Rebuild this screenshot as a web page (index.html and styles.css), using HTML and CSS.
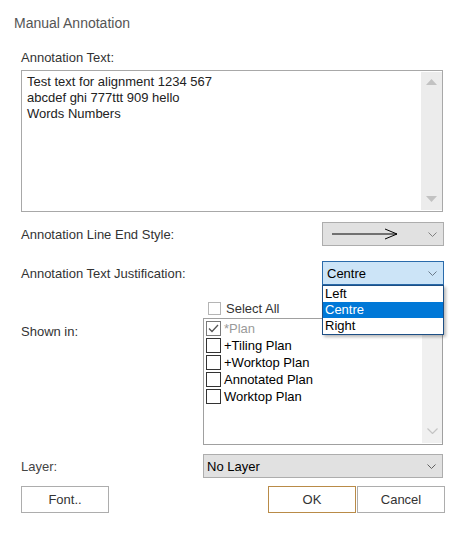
FILE: index.html
```html
<!DOCTYPE html>
<html>
<head>
<meta charset="utf-8">
<link rel="stylesheet" href="styles.css">
</head>
<body>
<div class="dialog">
  <div class="title">Manual Annotation</div>
  <div class="label-top">Annotation Text:</div>
  <div class="textbox">
    <div class="text-content">Test text for alignment 1234 567<br>abcdef ghi 777ttt 909 hello<br>Words Numbers</div>
    <div class="vscroll">
      <svg class="tri" width="11" height="6" viewBox="0 0 11 6"><path d="M0 6 L5.5 0 L11 6 Z" fill="#c2c2c2"/></svg>
      <svg class="tri" width="11" height="6" viewBox="0 0 11 6"><path d="M0 0 L5.5 6 L11 0 Z" fill="#c2c2c2"/></svg>
    </div>
  </div>

  <div class="row row-first">
    <span>Annotation Line End Style:</span>
    <div class="combo">
      <svg width="70" height="14" viewBox="0 0 70 14"><path d="M2 7 H67" stroke="#000" stroke-width="1"/><path d="M55 2 L67 7 L55 12" fill="none" stroke="#000" stroke-width="1"/></svg>
      <svg class="chev" width="9" height="5" viewBox="0 0 9 5"><path d="M0.5 0.5 L4.5 4.5 L8.5 0.5" fill="none" stroke="#808080" stroke-width="1"/></svg>
    </div>
  </div>

  <div class="row row-second">
    <span>Annotation Text Justification:</span>
    <div class="combo-wrap">
      <div class="combo combo-open">
        <span>Centre</span>
        <svg class="chev" width="9" height="5" viewBox="0 0 9 5"><path d="M0.5 0.5 L4.5 4.5 L8.5 0.5" fill="none" stroke="#6a7a8a" stroke-width="1"/></svg>
      </div>
      <div class="popup">
        <div class="opt">Left</div>
        <div class="opt opt-sel">Centre</div>
        <div class="opt">Right</div>
      </div>
    </div>
  </div>

  <div class="shown">
    <div class="shown-label">Shown in:</div>
    <div class="shown-right">
      <div class="select-all"><span class="cb cb-light"></span><span>Select All</span></div>
      <div class="listbox">
        <div class="items">
          <div class="item item-dim"><span class="cb cb-checked"><svg width="13" height="13" viewBox="0 0 13 13"><path d="M2 6.5 L5 9.5 L11 3" fill="none" stroke="#555" stroke-width="1.3"/></svg></span><span>*Plan</span></div>
          <div class="item"><span class="cb"></span><span>+Tiling Plan</span></div>
          <div class="item"><span class="cb"></span><span>+Worktop Plan</span></div>
          <div class="item"><span class="cb"></span><span>Annotated Plan</span></div>
          <div class="item"><span class="cb"></span><span>Worktop Plan</span></div>
        </div>
        <div class="lscroll">
          <svg width="11" height="6" viewBox="0 0 11 6"><path d="M0.5 0.5 L5.5 5.5 L10.5 0.5" fill="none" stroke="#c4c4c4" stroke-width="1.2"/></svg>
        </div>
      </div>
    </div>
  </div>

  <div class="layer-row">
    <span class="layer-label">Layer:</span>
    <div class="combo combo-wide">
      <span>No Layer</span>
      <svg class="chev" width="9" height="5" viewBox="0 0 9 5"><path d="M0.5 0.5 L4.5 4.5 L8.5 0.5" fill="none" stroke="#606060" stroke-width="1"/></svg>
    </div>
  </div>

  <div class="buttons">
    <button class="btn">Font..</button>
    <div class="btn-group">
      <button class="btn btn-default">OK</button>
      <button class="btn">Cancel</button>
    </div>
  </div>
</div>
</body>
</html>
```

FILE: styles.css
```css
html, body {
  margin: 0;
  padding: 0;
  background: #ffffff;
}
body {
  width: 468px;
  height: 537px;
  font-family: "Liberation Sans", Arial, sans-serif;
  font-size: 13px;
  color: #333333;
  overflow: hidden;
}
.dialog {
  padding: 0 23px 0 21px;
  width: 424px;
}
.title {
  margin-left: -7px;
  padding-top: 15px;
  line-height: 16px;
  font-size: 14px;
  color: #555555;
}
.label-top {
  margin-top: 19px;
  line-height: 16px;
}
.textbox {
  margin-top: 4px;
  width: 422px;
  height: 142px;
  box-sizing: border-box;
  border: 1px solid #a8a8a8;
  display: flex;
}
.text-content {
  flex: 1;
  padding: 3px 0 0 5px;
  line-height: 16px;
  color: #222222;
}
.vscroll {
  width: 21px;
  margin: 1px 0 1px 0;
  background: #ececec;
  display: flex;
  flex-direction: column;
  justify-content: space-between;
  align-items: center;
  padding: 7px 0 8px;
  box-sizing: border-box;
}
.row {
  display: flex;
  justify-content: space-between;
  align-items: center;
  width: 423px;
}
.row-first { margin-top: 10px; }
.row-second { margin-top: 15px; }
.combo {
  width: 122px;
  height: 24px;
  box-sizing: border-box;
  border: 1px solid #adadad;
  background: #e1e1e1;
  display: flex;
  align-items: center;
  justify-content: space-between;
  padding: 0 6px 0 7px;
  color: #000;
}
.combo-wrap {
  position: relative;
}
.combo-open {
  background: #cce4f7;
  border-color: #2a6bab;
  padding-left: 4px;
}
.popup {
  position: absolute;
  top: 24px;
  left: 0;
  width: 122px;
  box-sizing: border-box;
  border: 1px solid #1d4f85;
  background: #ffffff;
  box-shadow: 2px 2px 3px rgba(0, 0, 0, 0.28);
  z-index: 5;
}
.opt {
  height: 16px;
  line-height: 16px;
  padding-left: 2px;
  color: #000;
}
.opt-sel {
  background: #0078d7;
  color: #ffffff;
}
.shown {
  display: grid;
  grid-template-columns: 182px 240px;
  margin-top: 15px;
}
.shown-label {
  padding-top: 24px;
  line-height: 16px;
}
.select-all {
  display: flex;
  align-items: center;
  height: 16px;
  padding-left: 5px;
}
.select-all .cb {
  width: 13px;
  height: 13px;
  margin-right: 5px;
}
.cb {
  display: inline-flex;
  align-items: center;
  justify-content: center;
  width: 15px;
  height: 15px;
  box-sizing: border-box;
  border: 1px solid #333333;
  background: #ffffff;
  flex: none;
}
.cb-light {
  border-color: #b5b5b5;
}
.cb-checked {
  border-color: #7a7a7a;
}
.listbox {
  margin-top: 2px;
  height: 127px;
  box-sizing: border-box;
  border: 1px solid #a0a0a0;
  display: flex;
}
.items {
  flex: 1;
  padding: 1px 0 0 2px;
}
.item {
  display: flex;
  align-items: center;
  height: 17px;
  color: #000;
}
.item .cb {
  margin-right: 3px;
}
.item-dim {
  color: #9a9a9a;
}
.lscroll {
  width: 20px;
  margin: 1px 0 1px 0;
  background: #f0f0f0;
  display: flex;
  align-items: flex-end;
  justify-content: center;
  padding-bottom: 9px;
  box-sizing: border-box;
}
.layer-row {
  display: grid;
  grid-template-columns: 182px 240px;
  align-items: center;
  margin-top: 9px;
}
.layer-label {
  color: #444444;
}
.combo-wide {
  width: 240px;
  padding-left: 3px;
}
.buttons {
  display: flex;
  justify-content: space-between;
  margin-top: 8px;
  width: 424px;
}
.btn-group {
  display: flex;
  gap: 1px;
}
.btn {
  width: 88px;
  height: 27px;
  box-sizing: border-box;
  border: 1px solid #adadad;
  background: #ffffff;
  font-family: "Liberation Sans", Arial, sans-serif;
  font-size: 13px;
  color: #333333;
  padding: 0;
  margin: 0;
}
.btn-default {
  border-color: #b98b48;
}
```
